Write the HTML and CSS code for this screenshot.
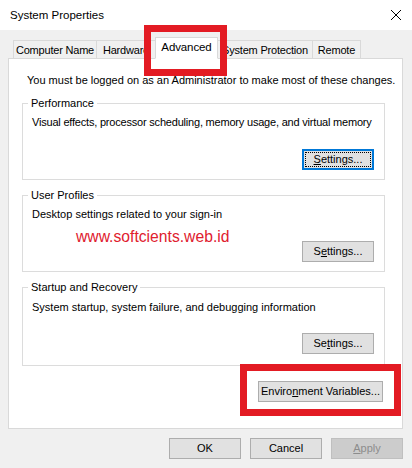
FILE: index.html
```html
<!DOCTYPE html>
<html lang="en">
<head>
<meta charset="utf-8">
<title>System Properties</title>
<link rel="stylesheet" href="styles.css">
</head>
<body>
<div class="window">
  <div class="titlebar">
    <span class="title">System Properties</span>
    <svg class="close" width="12" height="12" viewBox="0 0 12 12"><path d="M1 1 L11 11 M11 1 L1 11" stroke="#000" stroke-width="1" fill="none"/></svg>
  </div>
  <div class="content">
    <div class="tabs">
      <div class="tab tab-name">Computer Name</div>
      <div class="tab tab-hw">Hardware</div>
      <div class="tab tab-adv selected">Advanced</div>
      <div class="tab tab-sp">System Protection</div>
      <div class="tab tab-remote">Remote</div>
    </div>
    <div class="panel">
      <p class="admin">You must be logged on as an Administrator to make most of these changes.</p>
      <fieldset class="group">
        <legend>Performance</legend>
        <p class="desc desc-perf">Visual effects, processor scheduling, memory usage, and virtual memory</p>
        <div class="btnrow"><button class="btn focused"><span class="focusrect"><u>S</u>ettings...</span></button></div>
      </fieldset>
      <fieldset class="group">
        <legend>User Profiles</legend>
        <p class="desc">Desktop settings related to your sign-in</p>
        <div class="btnrow"><button class="btn">S<u>e</u>ttings...</button></div>
      </fieldset>
      <fieldset class="group group-startup">
        <legend>Startup and Recovery</legend>
        <p class="desc">System startup, system failure, and debugging information</p>
        <div class="btnrow"><button class="btn">Se<u>t</u>tings...</button></div>
      </fieldset>
      <div class="envrow"><button class="btn env">Enviro<u>n</u>ment Variables...</button></div>
      <div class="watermark">www.softcients.web.id</div>
    </div>
    <div class="footer">
      <button class="btn">OK</button>
      <button class="btn">Cancel</button>
      <button class="btn disabled"><u>A</u>pply</button>
    </div>
  </div>
  <div class="mark mark-tab"></div>
  <div class="mark mark-env"></div>
</div>
</body>
</html>
```
FILE: styles.css
```css
* { box-sizing: border-box; }
html, body { margin: 0; padding: 0; }
body {
  font-family: "Liberation Sans", Arial, sans-serif;
  font-size: 11px;
  color: #000;
  background: #f0f0f0;
}
.window {
  position: relative;
  width: 412px;
  height: 468px;
  overflow: hidden;
  background: #f0f0f0;
}
.titlebar {
  height: 30px;
  background: #fff;
  display: flex;
  align-items: center;
  justify-content: space-between;
  padding: 0 10px 0 10px;
}
.title { font-size: 11.5px; line-height: 14px; }
.close { display: block; }
.content {
  padding: 7px 9px 0 8px;
}
.tabs {
  display: flex;
  align-items: flex-end;
  padding-left: 5px;
  margin-bottom: -1px;
  position: relative;
  z-index: 1;
}
.tab {
  height: 19px;
  line-height: 19px;
  padding: 0;
  text-align: center;
  border: 1px solid #d9d9d9;
  border-right: none;
  background: #f0f0f0;
  white-space: nowrap;
  font-size: 11px;
  letter-spacing: -0.2px;
}
.tab-name { width: 83px; }
.tab-hw { width: 59px; }
.tab-adv { width: 63px; }
.tab-sp { width: 94px; }
.tab-remote { width: 49px; }
.tab:last-child { border-right: 1px solid #d9d9d9; }
.tab.selected {
  height: 22px;
  line-height: 19px;
  background: #fff;
  border-bottom-color: #fff;
  border-right: 1px solid #d9d9d9;
  font-size: 11.5px;
  letter-spacing: -0.1px;
}
.tab.selected + .tab { border-left: none; }
.panel {
  position: relative;
  height: 371px;
  border: 1px solid #d9d9d9;
  background: #fff;
  padding: 13px 17px 0 13px;
}
.admin {
  margin: 0;
  padding-left: 5px;
  line-height: 16px;
  white-space: nowrap;
}
.group {
  margin: 8px 0 0 0;
  padding: 0 10px 9px 9px;
  border: 1px solid #dcdcdc;
  min-width: 0;
}
.group-startup { padding-bottom: 11px; }
.group legend {
  margin-left: -4px;
  padding: 0 3px;
  line-height: 14px;
}
.desc {
  margin: 5px 0 0 0;
  line-height: 15px;
  white-space: nowrap;
}
.group-startup .desc { margin-top: 6px; }
.group-startup .btnrow { margin-top: 18px; }
.desc-perf { letter-spacing: -0.2px; }
.btnrow {
  display: flex;
  justify-content: flex-end;
  margin-top: 19px;
}
.btn {
  font-family: inherit;
  font-size: 11px;
  color: #000;
  width: 72px;
  height: 21px;
  padding: 0;
  background: #e1e1e1;
  border: 1px solid #adadad;
  border-radius: 0;
  line-height: 19px;
  text-align: center;
  white-space: nowrap;
}
.btn.focused {
  border: 2px solid #0078d7;
  padding: 1px;
}
.focusrect {
  display: block;
  height: 100%;
  line-height: 13px;
  border: 1px dotted #000;
}
.envrow {
  display: flex;
  justify-content: flex-end;
  margin-top: 15px;
  padding-right: 2px;
}
.btn.env { width: 125px; }
.btn.disabled {
  background: #cccccc;
  border-color: #bfbfbf;
  color: #8c8c8c;
}
.footer {
  display: flex;
  justify-content: flex-end;
  gap: 9px;
  margin-top: 9px;
}
.watermark {
  position: absolute;
  left: 67px;
  top: 169px;
  font-size: 15.7px;
  line-height: 18px;
  color: #e0202e;
}
.mark {
  position: absolute;
  border: 7px solid #e31b23;
  z-index: 5;
}
.mark-tab { left: 144px; top: 25px; width: 83px; height: 51px; }
.mark-env { left: 240px; top: 364px; width: 161px; height: 52px; }
```
